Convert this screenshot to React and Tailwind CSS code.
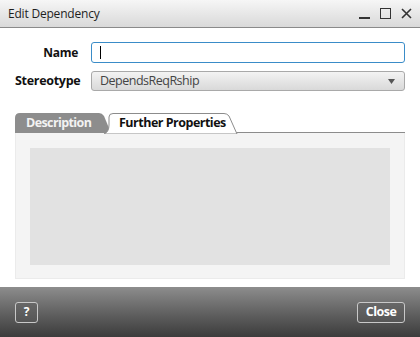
import { useState } from 'react';

const font = { fontFamily: '"Open Sans", "Liberation Sans", sans-serif' };

export default function App() {
  const [name, setName] = useState('');

  return (
    <div className="w-[420px] h-[337px] bg-white flex flex-col overflow-hidden text-[13px]" style={font}>
      {/* Title bar */}
      <div className="h-[28px] flex items-center justify-between pl-2 pr-2 bg-gradient-to-b from-[#f6f6f6] to-[#d9d9d9] border-b border-[#8a8a8a]">
        <span className="text-[#1e1e1e] text-[12px] tracking-[-0.2px]">Edit Dependency</span>
        <div className="flex items-center gap-[10px] text-[#333]">
          <svg width="11" height="11" viewBox="0 0 11 11">
            <rect x="0" y="9" width="11" height="2" fill="#333" />
          </svg>
          <svg width="11" height="11" viewBox="0 0 11 11">
            <rect x="0.5" y="0.5" width="10" height="10" fill="none" stroke="#333" />
          </svg>
          <svg width="11" height="11" viewBox="0 0 11 11">
            <path d="M1 1 L10 10 M10 1 L1 10" stroke="#333" strokeWidth="1.6" />
          </svg>
        </div>
      </div>

      {/* Form */}
      <div className="flex flex-col gap-[8px] pt-[14px] px-[15px]">
        <div className="flex items-center">
          <label className="w-[63px] text-right font-bold text-[#111] text-[12px] tracking-[-0.3px]">Name</label>
          <div className="ml-[13px] flex-1 h-[21px] border border-[#3a8cc8] rounded-[3px] flex items-center pl-[8px] bg-white">
            <span className="w-px h-[13px] bg-black" />
            <input
              value={name}
              onChange={(e) => setName(e.target.value)}
              className="hidden"
            />
          </div>
        </div>
        <div className="flex items-center">
          <label className="w-[63px] text-right font-bold text-[#111] text-[12.5px] tracking-[-0.3px]">Stereotype</label>
          <div className="ml-[13px] flex-1 h-[20px] border border-[#a9a9a9] rounded-[3px] flex items-center justify-between pl-[8px] pr-[9px] bg-gradient-to-b from-[#f3f3f3] to-[#d9d9d9]">
            <span className="text-[#444] text-[12.5px] tracking-[-0.5px]">DependsReqRship</span>
            <svg width="7" height="5" viewBox="0 0 7 5">
              <path d="M0 0 L7 0 L3.5 5 Z" fill="#555" />
            </svg>
          </div>
        </div>
      </div>

      {/* Tabs */}
      <div className="mt-[22px] px-[15px] flex flex-col">
        <div className="flex h-[20px] border-b border-[#8c8c8c] relative">
          <div className="relative w-[95px] h-[20px] flex items-center pl-[11px]">
            <svg className="absolute inset-0" width="96" height="20" viewBox="0 0 96 20">
              <path d="M0 20 L0 5 Q0 0 5 0 L84 0 Q87 0 89 3 L96 20 Z" fill="#8d8d8d" />
            </svg>
            <span className="relative font-bold text-[#f2f2f2] text-[12.5px] tracking-[-0.6px]">Description</span>
          </div>
          <div className="relative -ml-[6px] w-[134px] h-[20px] flex items-center pl-[15px]">
            <svg className="absolute inset-0" width="134" height="21" viewBox="0 0 134 21">
              <path d="M0 21 Q5 19 5 12 L5 4 Q5 0.5 9 0.5 L120 0.5 Q123 0.5 125 3 L133 21 Z" fill="#fff" stroke="#8c8c8c" strokeWidth="1" />
            </svg>
            <span className="relative font-bold text-[#111] text-[12.5px] tracking-[-0.5px]">Further Properties</span>
          </div>
        </div>
        <div className="h-[146px] bg-[#f4f4f4] border-x border-b border-[#ebebeb] px-[14px] pt-[15px] pb-[13px]">
          <div className="h-full bg-[#e2e2e2]" />
        </div>
      </div>

      <div className="flex-1" />

      {/* Footer */}
      <div className="h-[50px] bg-gradient-to-b from-[#8d8d8d] to-[#3c3c3c] flex items-center justify-between px-[15px]">
        <button className="w-[23px] h-[21px] border border-[#c8c8c8] rounded-[3px] text-white font-bold text-[12px] flex items-center justify-center bg-[#5a5a5a]/40">
          ?
        </button>
        <button className="w-[48px] h-[21px] border border-[#c8c8c8] rounded-[3px] text-white font-bold text-[12.5px] tracking-[-0.5px] flex items-center justify-center bg-[#5a5a5a]/40">
          Close
        </button>
      </div>
    </div>
  );
}
